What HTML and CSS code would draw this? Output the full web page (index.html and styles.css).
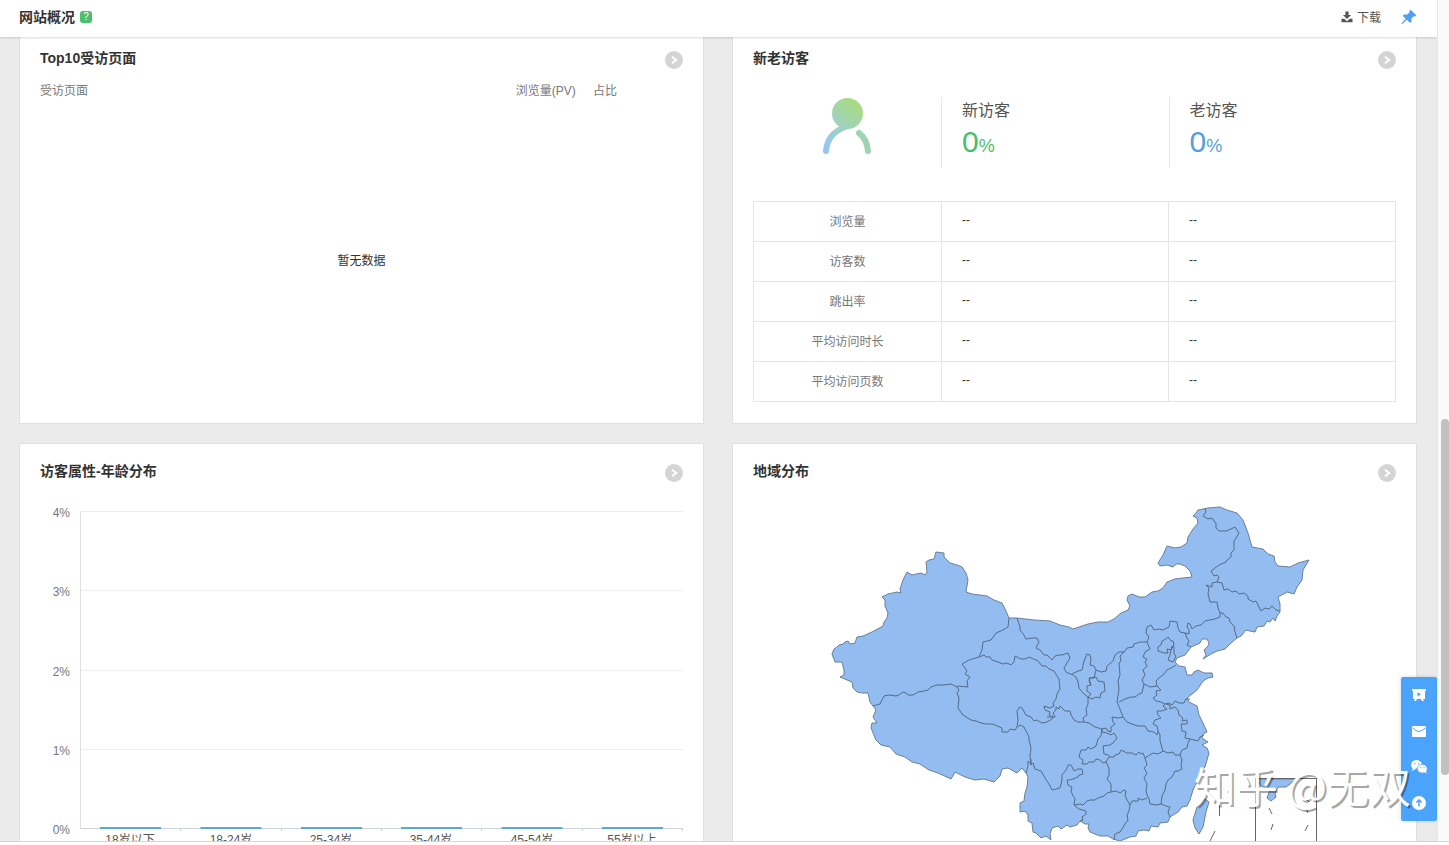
FILE: index.html
```
<!DOCTYPE html>
<html lang="zh-CN">
<head>
    <meta charset="UTF-8">
    <meta name="viewport" content="width=device-width, initial-scale=1.0">
    <title>网站概况</title>
    <link rel="stylesheet" href="styles.css">
</head>
<body>
    <div class="page">
        <header class="top-bar">
            <h1>网站概况</h1>
            <button class="help" aria-label="帮助">?</button>
            <button class="download">
                <svg width="12" height="12" viewBox="0 0 12 12" aria-hidden="true">
                    <path d="M4.4 0.5h3.2v3.5h2.5L6 8 1.9 4h2.5z" fill="#555"/>
                    <path d="M0.5 7.7h2.7L6 10.200l2.800-2.500h2.700v3.600h-11z" fill="#555"/>
                </svg>
                下载
            </button>
            <button class="pin" aria-label="固定">
                <svg width="16" height="16" viewBox="0 0 16 16" aria-hidden="true">
                    <path d="M9.600 0.700L15.300 6.300 14 7.500 12.700 7.200 10.300 9.700 10.500 12.500 9 13.900 5.900 10.800 1.500 15 .5 14.500 4.700 9.700 1.700 6.700 3.200 5.400 6.200 5.600 8.600 3.300 8.300 2z" fill="#4c9ff2"/>
                </svg>
            </button>
        </header>

        <main class="cards">
            <section class="card">
                <div class="card-head">
                    <h2>Top10受访页面</h2>
                    <a class="more" href="#" aria-label="查看更多"><svg width="18" height="18" viewBox="0 0 18 18"><circle cx="9" cy="9" r="9" fill="#d4d4d4"/><path d="M7 5.7l4.2 3.3L7 12.3" fill="none" stroke="#fff" stroke-width="2"/></svg></a>
                </div>
                <table class="top-pages">
                    <thead>
                        <tr><th class="col-page">受访页面</th><th class="col-pv">浏览量(PV)</th><th>占比</th></tr>
                    </thead>
                    <tbody>
                        <tr><td colspan="3">暂无数据</td></tr>
                    </tbody>
                </table>
            </section>

            <section class="card">
                <div class="card-head">
                    <h2>新老访客</h2>
                    <a class="more" href="#" aria-label="查看更多"><svg width="18" height="18" viewBox="0 0 18 18"><circle cx="9" cy="9" r="9" fill="#d4d4d4"/><path d="M7 5.7l4.2 3.3L7 12.3" fill="none" stroke="#fff" stroke-width="2"/></svg></a>
                </div>
                <div class="summary">
                    <div class="avatar">
                        <svg width="50" height="58" viewBox="0 0 50 58" aria-hidden="true">
                            <defs>
                                <linearGradient id="person" gradientUnits="userSpaceOnUse" x1="38" y1="6" x2="3" y2="50">
                                    <stop offset="0" stop-color="#aadb7c"/>
                                    <stop offset="0.5" stop-color="#a0d3bb"/>
                                    <stop offset="1" stop-color="#95c5f5"/>
                                </linearGradient>
                            </defs>
                            <circle cx="25.5" cy="16.5" r="15.5" fill="url(#person)"/>
                            <path d="M4 54C5 43 11 35 21 31Q27 29 30 26" fill="none" stroke="url(#person)" stroke-width="6" stroke-linecap="round"/>
                            <path d="M37 36Q45 42 46 54" fill="none" stroke="#a0d3b3" stroke-width="6" stroke-linecap="round"/>
                        </svg>
                    </div>
                    <div class="rate rate-new">
                        <h3>新访客</h3>
                        <p>0<small>%</small></p>
                    </div>
                    <div class="rate rate-old">
                        <h3>老访客</h3>
                        <p>0<small>%</small></p>
                    </div>
                </div>
                <table class="visitors">
                    <tr><th>浏览量</th><td>--</td><td>--</td></tr>
                    <tr><th>访客数</th><td>--</td><td>--</td></tr>
                    <tr><th>跳出率</th><td>--</td><td>--</td></tr>
                    <tr><th>平均访问时长</th><td>--</td><td>--</td></tr>
                    <tr><th>平均访问页数</th><td>--</td><td>--</td></tr>
                </table>
            </section>

            <section class="card">
                <div class="card-head">
                    <h2>访客属性-年龄分布</h2>
                    <a class="more" href="#" aria-label="查看更多"><svg width="18" height="18" viewBox="0 0 18 18"><circle cx="9" cy="9" r="9" fill="#d4d4d4"/><path d="M7 5.7l4.2 3.3L7 12.3" fill="none" stroke="#fff" stroke-width="2"/></svg></a>
                </div>
                <svg class="chart" viewBox="40 495 643 360">
                    <path d="M80 511.500H683M80 590.500H683M80 670.500H683M80 749.500H683" stroke="#eee"/>
                    <path d="M80.500 511V828" stroke="#e0e0e0"/>
                    <path d="M80 828.500H683M180.500 828v3M281.500 828v3M381.500 828v3M481.500 828v3M582.500 828v3M682.500 828v3" stroke="#ccd3da"/>
                    <path d="M100 828h61M200.500 828h61M301 828h61M401 828h61M501.500 828h61M602 828h61" stroke="#5aa9d6" stroke-width="2"/>
                    <g class="axis-y">
                        <text x="70" y="517">4%</text>
                        <text x="70" y="596">3%</text>
                        <text x="70" y="676">2%</text>
                        <text x="70" y="755">1%</text>
                        <text x="70" y="834">0%</text>
                    </g>
                    <g class="axis-x">
                        <text x="130" y="844">18岁以下</text>
                        <text x="231" y="844">18-24岁</text>
                        <text x="331" y="844">25-34岁</text>
                        <text x="431" y="844">35-44岁</text>
                        <text x="532" y="844">45-54岁</text>
                        <text x="632" y="844">55岁以上</text>
                    </g>
                </svg>
            </section>

            <section class="card">
                <div class="card-head">
                    <h2>地域分布</h2>
                    <a class="more" href="#" aria-label="查看更多"><svg width="18" height="18" viewBox="0 0 18 18"><circle cx="9" cy="9" r="9" fill="#d4d4d4"/><path d="M7 5.7l4.2 3.3L7 12.3" fill="none" stroke="#fff" stroke-width="2"/></svg></a>
                </div>
                <svg class="map" viewBox="753 495 643 360" role="img" aria-label="地域分布">
                    <!-- mainland -->
                    <path class="land" d="M832 654L834 649 837 647 839 645 843 644 845 642 848 641 850 644 855 643 857 637 863 636 872 632 883 626 884 622 887 618 888 613 885 606 885 600 882 597 888 594 897 592 901 593 900 589 903 580 907 572 912 575 921 573 925 575 927 572 926 562 929 560 934 559 936 552 944 553 944 557 950 563 957 565 962 567 966 573 968 580 966 592 972 594 980 595 987 596 994 600 1002 603 1006 611 1009 618 1017 618 1034 620 1050 621 1060 625 1069 627 1073 629 1079 627 1088 624 1098 622 1108 622 1114 619 1121 613 1128 610 1130 606 1127 600 1128 596 1132 594 1139 597 1145 597 1152 592 1158 591 1163 588 1167 582 1175 579 1183 578 1192 577 1190 571 1185 566 1180 564 1176 564 1173 567 1167 565 1160 566 1158 563 1163 555 1167 546 1175 548 1181 547 1187 543 1188 537 1193 529 1198 523 1197 518 1193 516 1196 513 1198 510 1208 508 1220 507 1227 510 1237 513 1243 520 1248 533 1252 547 1263 549 1268 554 1274 556 1275 562 1278 566 1290 567 1298 563 1309 560 1303 570 1302 580 1297 587 1294 594 1287 592 1278 597 1280 604 1280 612 1277 616 1275 621 1273 618 1270 622 1267 621 1264 626 1257 627 1255 632 1250 631 1246 630 1241 636 1237 638 1231 643 1225 649 1217 651 1211 654 1203 659 1206 655 1204 650 1208 646 1209 643 1207 639 1202 639 1200 643 1191 647 1188 651 1185 655 1177 658 1175 662 1179 666 1185 667 1187 675 1192 675 1194 672 1198 670 1204 673 1212 673 1213 677 1208 678 1203 681 1197 690 1187 698 1189 702 1197 706 1199 715 1203 723 1207 732 1203 734 1202 738 1208 742 1202 745 1207 748 1209 753 1207 760 1205 767 1201 771 1197 782 1193 790 1190 800 1187 806 1182 807 1178 812 1170 817 1168 822 1160 823 1158 827 1151 826 1149 831 1144 830 1138 831 1136 836 1130 837 1120 841 1113 839 1108 836 1100 836 1095 834 1090 832 1088 828 1089 824 1085 824 1080 821 1077 825 1070 827 1067 825 1061 829 1058 826 1052 828 1050 834 1051 840 1046 836 1041 838 1036 833 1033 832 1032 823 1028 821 1028 815 1025 811 1020 812 1020 803 1024 801 1025 793 1027 787 1028 777 1026 773 1022 768 1020 770 1017 773 1008 768 1002 769 1000 776 994 782 984 779 975 780 965 777 955 772 951 779 938 773 929 770 920 764 912 762 905 757 896 754 890 747 881 745 876 740 871 728 872 723 877 723 873 717 876 710 873 706 870 702 868 693 862 693 857 692 853 688 852 682 840 677 844 675 844 670 842 662 835 662z"/>
                    <!-- province borders -->
                    <g class="border">
                        <path d="M873 706L880 704 882 700 884 696 889 695 896 696 899 695 903 692 906 693 908 695 913 695 918 692 924 691 928 690 931 687 937 685 944 685 951 684 957 687 958 686 968 687 967 681 970 677 965 674 967 671 965 668 962 664 969 660 979 657 982 650 983 642 991 640 996 633 1003 630 1008 627 1009 618"/>
                        <path d="M957 687L959 690 957 693 959 698 958 708 962 714 966 717 971 720 976 721 981 723 986 724 993 724 997 726 1002 728 1002 732 1008 732 1010 729 1015 730 1017 727 1018 720 1017 711 1020 707 1022 708 1026 715 1031 717 1034 721 1037 720 1042 723 1047 722 1052 719 1053 717 1049 715 1050 712 1045 710 1044 706 1050 708 1054 706 1053 703 1056 699 1057 694 1060 689 1059 679 1054 671 1049 669 1046 666 1042 666 1038 661 1029 657 1025 659 1021 659 1015 656 1014 662 1011 665 1007 663 1003 664 998 662 992 660 990 657 986 657 984 655 979 657"/>
                        <path d="M1017 618L1020 627 1020 630 1024 635 1026 639 1032 638 1037 638 1039 642 1036 648 1040 650 1044 655 1047 655 1052 660 1055 656 1059 655 1062 655 1068 653 1070 658 1067 663 1064 668 1066 672 1068 673 1073 675 1076 677 1078 682 1079 688 1084 694 1088 697 1088 704 1086 709 1087 715 1083 718 1084 722 1078 722 1074 720 1071 715 1070 711 1065 711 1060 706 1059 709 1056 707 1056 710 1053 713 1055 717 1047 717"/>
                        <path d="M1018 727L1020 725 1024 727 1026 731 1029 737 1029 740 1031 748 1030 756 1031 765 1033 763 1035 769 1041 771 1045 778 1049 784 1052 790 1060 788 1062 780 1062 775 1066 770 1068 765 1071 765 1074 771 1078 769 1082 769 1083 774 1079 775 1078 777 1073 779 1070 780 1067 780 1068 785 1072 787 1071 791 1073 796 1075 798 1074 805 1079 809 1086 811 1086 814 1082 817 1083 820 1080 821"/>
                        <path d="M1026 773L1028 766 1028 761 1031 764 1031 759M1084 722L1089 723 1095 727 1102 729 1101 736 1098 739 1096 746 1091 749 1088 747 1086 750 1081 750 1079 757 1083 760 1082 764 1087 764 1089 762 1094 762 1096 759 1100 760 1103 763 1106 762 1109 768 1109 775 1107 779 1111 784 1111 792 1107 793 1104 796 1098 798 1095 800 1090 800 1087 801 1083 805 1080 804 1074 805"/>
                        <path d="M1072 674L1078 671 1082 670 1084 661 1087 654 1090 655 1091 659 1090 665 1094 666 1096 670 1094 678 1089 678 1091 685 1087 686 1087 691 1091 694 1088 697M1091 685L1089 681 1090 678 1096 677 1098 681 1104 682 1105 691 1101 693 1100 698 1096 697 1092 699 1088 697M1096 670L1101 672 1106 671 1107 666 1113 661 1115 655 1119 652 1124 652 1127 648 1133 647 1134 644 1140 642 1147 642"/>
                        <path d="M1124 652L1120 656 1121 661 1119 663 1120 675 1118 681 1119 689 1117 702 1120 709 1123 717 1118 718 1112 717 1113 722 1115 724 1111 727 1111 732 1108 731 1106 728 1102 729M1119 702L1125 699 1131 697 1135 697 1139 694 1142 693 1144 684 1142 680 1145 675 1143 670 1147 666 1145 662 1147 659 1143 657 1145 652 1150 649 1147 642 1149 637 1146 633 1147 627 1151 625 1154 630 1159 629 1163 630 1169 627 1170 621 1177 622 1178 628 1180 632 1185 633 1189 634 1189 630 1187 627 1188 623 1190 624 1192 629 1196 626 1201 625 1205 621 1210 620 1215 619 1220 617 1220 613"/>
                        <path d="M1144 684L1150 687 1157 686 1156 681 1159 678 1163 675 1167 670 1173 667 1176 665M1157 686L1161 690 1156 691 1157 695 1153 698 1156 701 1161 702 1165 704 1169 703 1172 705 1175 701 1179 703 1184 703 1186 699 1190 699M1165 704L1163 706 1167 709 1162 711 1157 711 1158 715 1161 718 1155 720 1153 724 1157 726 1158 731 1157 735 1154 732 1148 731 1145 726 1142 726 1138 726 1132 724 1127 722 1123 717"/>
                        <path d="M1166 704L1170 705 1170 709 1175 707 1178 710 1179 715 1183 718 1182 721 1187 720 1187 724 1181 724 1182 731 1186 732 1185 738 1190 739 1198 741 1200 737 1204 735M1190 739L1188 743 1187 748 1182 750 1180 755 1182 760 1181 765 1182 769 1178 771 1175 771 1172 777 1168 780 1166 784 1165 790 1162 796 1161 804 1166 806 1170 807 1168 812 1170 817M1158 731L1160 735 1160 741 1163 751 1158 754 1153 753 1145 758 1143 753 1141 754 1139 752 1136 755 1132 753 1127 753 1121 750 1119 754 1115 755 1114 757 1109 757 1106 762"/>
                        <path d="M1163 751L1168 753 1173 752 1175 755 1180 755M1145 758L1147 765 1144 768 1147 773 1144 778 1147 784 1146 790 1147 795 1149 799 1150 804 1157 805 1161 804M1147 798L1142 800 1138 798 1138 801 1132 801 1130 805 1127 800 1125 795 1126 791 1124 790 1120 793 1116 791 1111 792M1130 805L1129 811 1127 815 1128 820 1125 824 1122 829 1120 832 1115 834 1114 840M1102 729L1102 732 1107 733 1111 735 1114 733 1117 738 1113 743 1110 745 1103 746 1104 754 1108 755 1110 757"/>
                        <path d="M1158 651L1158 647 1161 645 1162 641 1166 639 1168 637 1171 641 1173 641 1174 645 1171 650 1167 649 1168 653 1164 653zM1171 650L1172 646 1174 647 1174 654 1176 656 1173 662 1168 660 1170 655zM1185 633L1187 638 1189 641 1187 645 1191 647"/>
                        <path d="M1205 508L1206 512 1203 516 1208 519 1212 518 1214 521 1216 523 1216 528 1219 531 1226 531 1231 529 1235 527 1239 533 1236 538 1234 541 1234 550 1231 553 1231 557 1227 560 1226 562 1219 565 1211 571 1214 576 1217 575 1219 577 1217 582 1222 583 1224 590 1228 589 1232 592 1236 591 1239 594 1244 593 1248 596 1248 599 1253 602 1256 601 1258 605 1261 611 1265 608 1269 609 1272 606 1276 610 1280 611"/>
                        <path d="M1217 582L1212 583 1212 587 1206 585 1209 588 1208 594 1210 602 1217 602 1218 608 1220 613 1223 613 1226 617 1229 618 1230 622 1234 626 1235 632 1237 638"/>
                    </g>
                    <path class="land" d="M1205 799L1209 802 1206 812 1203 827 1199 834 1195 828 1193 820 1197 807z"/>
                    <!-- south sea inset -->
                    <path class="land" d="M1257 779H1297L1286 787 1278 787 1275 793 1276 797 1271 801 1267 798 1270 790 1261 786z"/>
                    <path class="inset" d="M1255.500 841V778.500H1316.500V841M1219.500 804v12M1215 831l-5 10M1269 808l3 6M1273 824l-2 6M1306 808l2 5M1308 825l-3 6M1307 800l2 2M1229 791v2"/>
                </svg>
            </section>
        </main>

        <nav class="side-tools" aria-label="快捷工具">
            <button aria-label="视频教程">
                <svg width="16" height="16" viewBox="0 0 16 16"><path d="M1 2h14v2h-1v8h-2l1 2h-2l-1-2H6l-1 2H3l1-2H2V4H1z" fill="#fff"/><path d="M6.500 5v4.500L10 7.200z" fill="#4aa4fb"/></svg>
            </button>
            <button aria-label="邮件">
                <svg width="16" height="16" viewBox="0 0 16 16"><rect x="1" y="3" width="14" height="11" rx="1" fill="#fff"/><path d="M2 5q6 7 12 0" fill="none" stroke="#4aa4fb"/></svg>
            </button>
            <button aria-label="微信">
                <svg width="18" height="16" viewBox="0 0 18 16"><path d="M2 12l.8-2.500A5.500 4.800 0 1 1 12 6" fill="#fff"/><ellipse cx="12.300" cy="9.700" rx="5" ry="4.300" fill="#fff" stroke="#4aa4fb" stroke-width=".7"/><path d="M14 13l2.500 1.500-.5-3z" fill="#fff"/><g fill="#4aa4fb"><circle cx="5" cy="4.800" r=".7"/><circle cx="8.700" cy="4.800" r=".7"/><circle cx="10.800" cy="8.700" r=".6"/><circle cx="14" cy="8.700" r=".6"/></g></svg>
            </button>
            <button aria-label="返回顶部">
                <svg width="16" height="16" viewBox="0 0 16 16"><circle cx="8" cy="8" r="7" fill="#fff"/><path d="M8 11.500V5M5.300 7.500L8 4.800l2.700 2.700" fill="none" stroke="#4aa4fb" stroke-width="1.500"/></svg>
            </button>
        </nav>
        <div class="scrollbar"><div class="thumb"></div></div>
        <div class="watermark">知乎 @无双</div>
    </div>
</body>
</html>
```
FILE: styles.css
```
* {
    box-sizing: border-box;
}

body {
    margin: 0;
    background: #fff;
    color: #333;
    font-family: "Liberation Sans", "Noto Sans CJK SC", sans-serif;
    font-size: 12px;
}

h1, h2, h3, p {
    margin: 0;
}

button {
    padding: 0;
    border: none;
    background: none;
    font: inherit;
    cursor: pointer;
}

.page {
    position: relative;
    display: flex;
    flex-direction: column;
    height: calc(100vh - 3px);
    padding-right: 12px;
    overflow: hidden;
    background: #ebebeb;
    border-bottom: 1px solid #d5d5d5;
}

/* 顶部栏 */
.top-bar {
    position: relative;
    z-index: 2;
    display: flex;
    align-items: center;
    flex: none;
    height: 37px;
    padding: 0 20px 4px 19px;
    background: #fff;
    box-shadow: 0 1px 2px rgba(0, 0, 0, 0.15);
}

.top-bar h1 {
    font-size: 14px;
    line-height: 20px;
}

.help {
    width: 12px;
    height: 12px;
    margin-left: 5px;
    border-radius: 3px;
    background: #4bbf6b;
    color: #fff;
    font-size: 10px;
    line-height: 12px;
}

.download {
    display: flex;
    align-items: center;
    gap: 4px;
    margin-left: auto;
    color: #555;
}

.pin {
    display: flex;
    margin-left: 20px;
}

/* 卡片 */
.cards {
    display: grid;
    grid-template-columns: 1fr 1fr;
    grid-template-rows: 394px auto;
    gap: 19px 28px;
    margin-top: -7px;
    padding: 0 20px 0 19px;
}

.card {
    display: flex;
    flex-direction: column;
    padding: 0 20px;
    background: #fff;
    border: 1px solid #e0e0e0;
}

.card-head {
    display: flex;
    align-items: center;
    justify-content: space-between;
    flex: none;
    height: 51px;
    padding-top: 6px;
}

.card-head h2 {
    padding-bottom: 4px;
    font-size: 14px;
    line-height: 20px;
}

.more {
    display: flex;
}

/* 受访页面 */
.top-pages {
    flex: 1;
    display: flex;
    flex-direction: column;
    color: #333;
}

.top-pages thead tr {
    display: flex;
}

.top-pages th {
    line-height: 18px;
    padding: 0;
    font-weight: normal;
    text-align: left;
    color: #777;
}

.col-page {
    flex: 0 0 74%;
}

.col-pv {
    flex: 0 0 12%;
}

.top-pages tbody tr {
    display: flex;
    justify-content: center;
    padding-top: 152px;
}

.top-pages td {
    padding: 0;
    line-height: 18px;
}

/* 新老访客 */
.summary {
    display: flex;
    height: 71px;
    margin: 15px 0 33px;
}

.avatar {
    display: flex;
    justify-content: center;
    flex: 0 0 188px;
}

.rate {
    flex: 1;
    padding-left: 20px;
    border-left: 1px solid #e6e6e6;
}

.rate h3 {
    padding-top: 2px;
    color: #555;
    font-size: 16px;
    font-weight: normal;
    line-height: 24px;
}

.rate p {
    font-size: 30px;
    line-height: 38px;
}

.rate small {
    font-size: 18px;
}

.rate-new p {
    color: #4bbf6b;
}

.rate-old p {
    color: #559fe0;
}

.visitors {
    width: 100%;
    border-collapse: collapse;
    table-layout: fixed;
}

.visitors th,
.visitors td {
    height: 40px;
    padding: 0 0 3px;
    border: 1px solid #e6e6e6;
}

.visitors th {
    width: 188px;
    color: #777;
    font-weight: normal;
}

.visitors td {
    padding-left: 20px;
}

/* 图表 */
.chart,
.map {
    display: block;
    width: 100%;
}

.axis-y {
    fill: #777;
    text-anchor: end;
}

.axis-x {
    fill: #555;
    text-anchor: middle;
}

.land {
    fill: #93bdf0;
    stroke: #6a7f98;
    stroke-linejoin: round;
}

.border {
    fill: none;
    stroke: #566b85;
    stroke-linejoin: round;
}

.inset {
    fill: none;
    stroke: #666;
}

/* 右侧悬浮工具 */
.side-tools {
    position: absolute;
    z-index: 3;
    right: 12px;
    bottom: 20px;
    display: flex;
    flex-direction: column;
    width: 36px;
    background: #4aa4fb;
    border-radius: 2px;
    box-shadow: 0 0 4px rgba(0, 0, 0, 0.15);
}

.side-tools button {
    display: flex;
    align-items: center;
    justify-content: center;
    height: 36px;
}

.scrollbar {
    position: absolute;
    z-index: 3;
    top: 0;
    right: 0;
    bottom: 0;
    width: 12px;
    padding-top: 419px;
    background: #fafafa;
    border-left: 1px solid #e8e8e8;
}

.thumb {
    height: 356px;
    margin-left: 3px;
    border-radius: 4px;
    background: #c1c1c1;
}

.watermark {
    position: absolute;
    z-index: 4;
    right: 38px;
    bottom: 26px;
    color: #fff;
    font-family: "Noto Sans CJK SC", sans-serif;
    font-size: 42px;
    line-height: 60px;
    text-shadow: 2px 2px 0 rgba(0, 0, 0, 0.35);
    pointer-events: none;
}
```
